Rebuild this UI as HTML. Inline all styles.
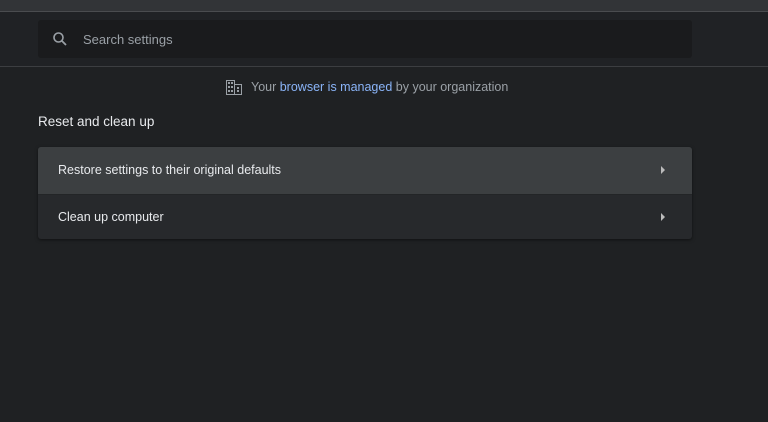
<!DOCTYPE html>
<html><head><style>
body{margin:0;width:768px;height:422px;background:#1f2123;font-family:"Liberation Sans",sans-serif;overflow:hidden;position:relative}
.top{position:absolute;left:0;top:0;width:768px;height:11px;background:#323437;border-bottom:1px solid #4a4c4f}
.tool{position:absolute;left:0;top:12px;width:768px;height:54px;background:#202225;border-bottom:1px solid #3c3e41}
.search{position:absolute;left:38px;top:20px;width:654px;height:38px;background:#1a1b1d;border-radius:3px}
.search span{position:absolute;left:45px;top:12px;font-size:13px;color:#9aa0a6}
.managed{position:absolute;left:226px;top:80px;font-size:12.5px;color:#9aa0a6}
.managed b{font-weight:normal;color:#8ab4f8}
h2{position:absolute;left:38px;top:114px;margin:0;font-size:13.5px;font-weight:normal;color:#e8eaed}
.card{position:absolute;left:38px;top:147px;width:654px;height:92px;border-radius:3px;overflow:hidden;background:#27292c;box-shadow:0 1px 3px rgba(0,0,0,.5)}
.row{position:relative;height:46px;font-size:12.5px;color:#e8eaed}
.row span{position:absolute;left:20px;top:16px}
.row i{position:absolute;left:623px;top:19px;width:0;height:0;border-left:4px solid #bbb;border-top:4px solid transparent;border-bottom:4px solid transparent}
</style></head><body>
<div class="top"></div>
<div class="tool"></div>
<div class="search">
<svg style="position:absolute;left:14px;top:11px" width="16" height="16" viewBox="0 0 16 16"><circle cx="6.5" cy="6.5" r="4.5" fill="none" stroke="#9aa0a6" stroke-width="1.6"/><line x1="10" y1="10" x2="14" y2="14" stroke="#9aa0a6" stroke-width="1.8"/></svg>
<span>Search settings</span></div>
<svg style="position:absolute;left:226px;top:80px" width="16" height="15" viewBox="0 0 16 15"><rect x="0.5" y="0.5" width="8" height="14" fill="none" stroke="#9aa0a6"/><rect x="8.5" y="4.5" width="7" height="10" fill="none" stroke="#9aa0a6"/><g fill="#9aa0a6"><rect x="2" y="2" width="2" height="2"/><rect x="5" y="2" width="2" height="2"/><rect x="2" y="6" width="2" height="2"/><rect x="5" y="6" width="2" height="2"/><rect x="2" y="10" width="2" height="2"/><rect x="5" y="10" width="2" height="2"/><rect x="11" y="7" width="2" height="2"/><rect x="11" y="10" width="2" height="2"/></g></svg>
<div class="managed" style="left:251px">Your <b>browser is managed</b> by your organization</div>
<h2>Reset and clean up</h2>
<div class="card">
<div class="row" style="background:#3c3f41;height:47px"><span>Restore settings to their original defaults</span><i></i></div>
<div class="row" style="border-top:1px solid #232527;height:45px"><span style="top:15px">Clean up computer</span><i style="top:18px"></i></div>
</div>
</body></html>
